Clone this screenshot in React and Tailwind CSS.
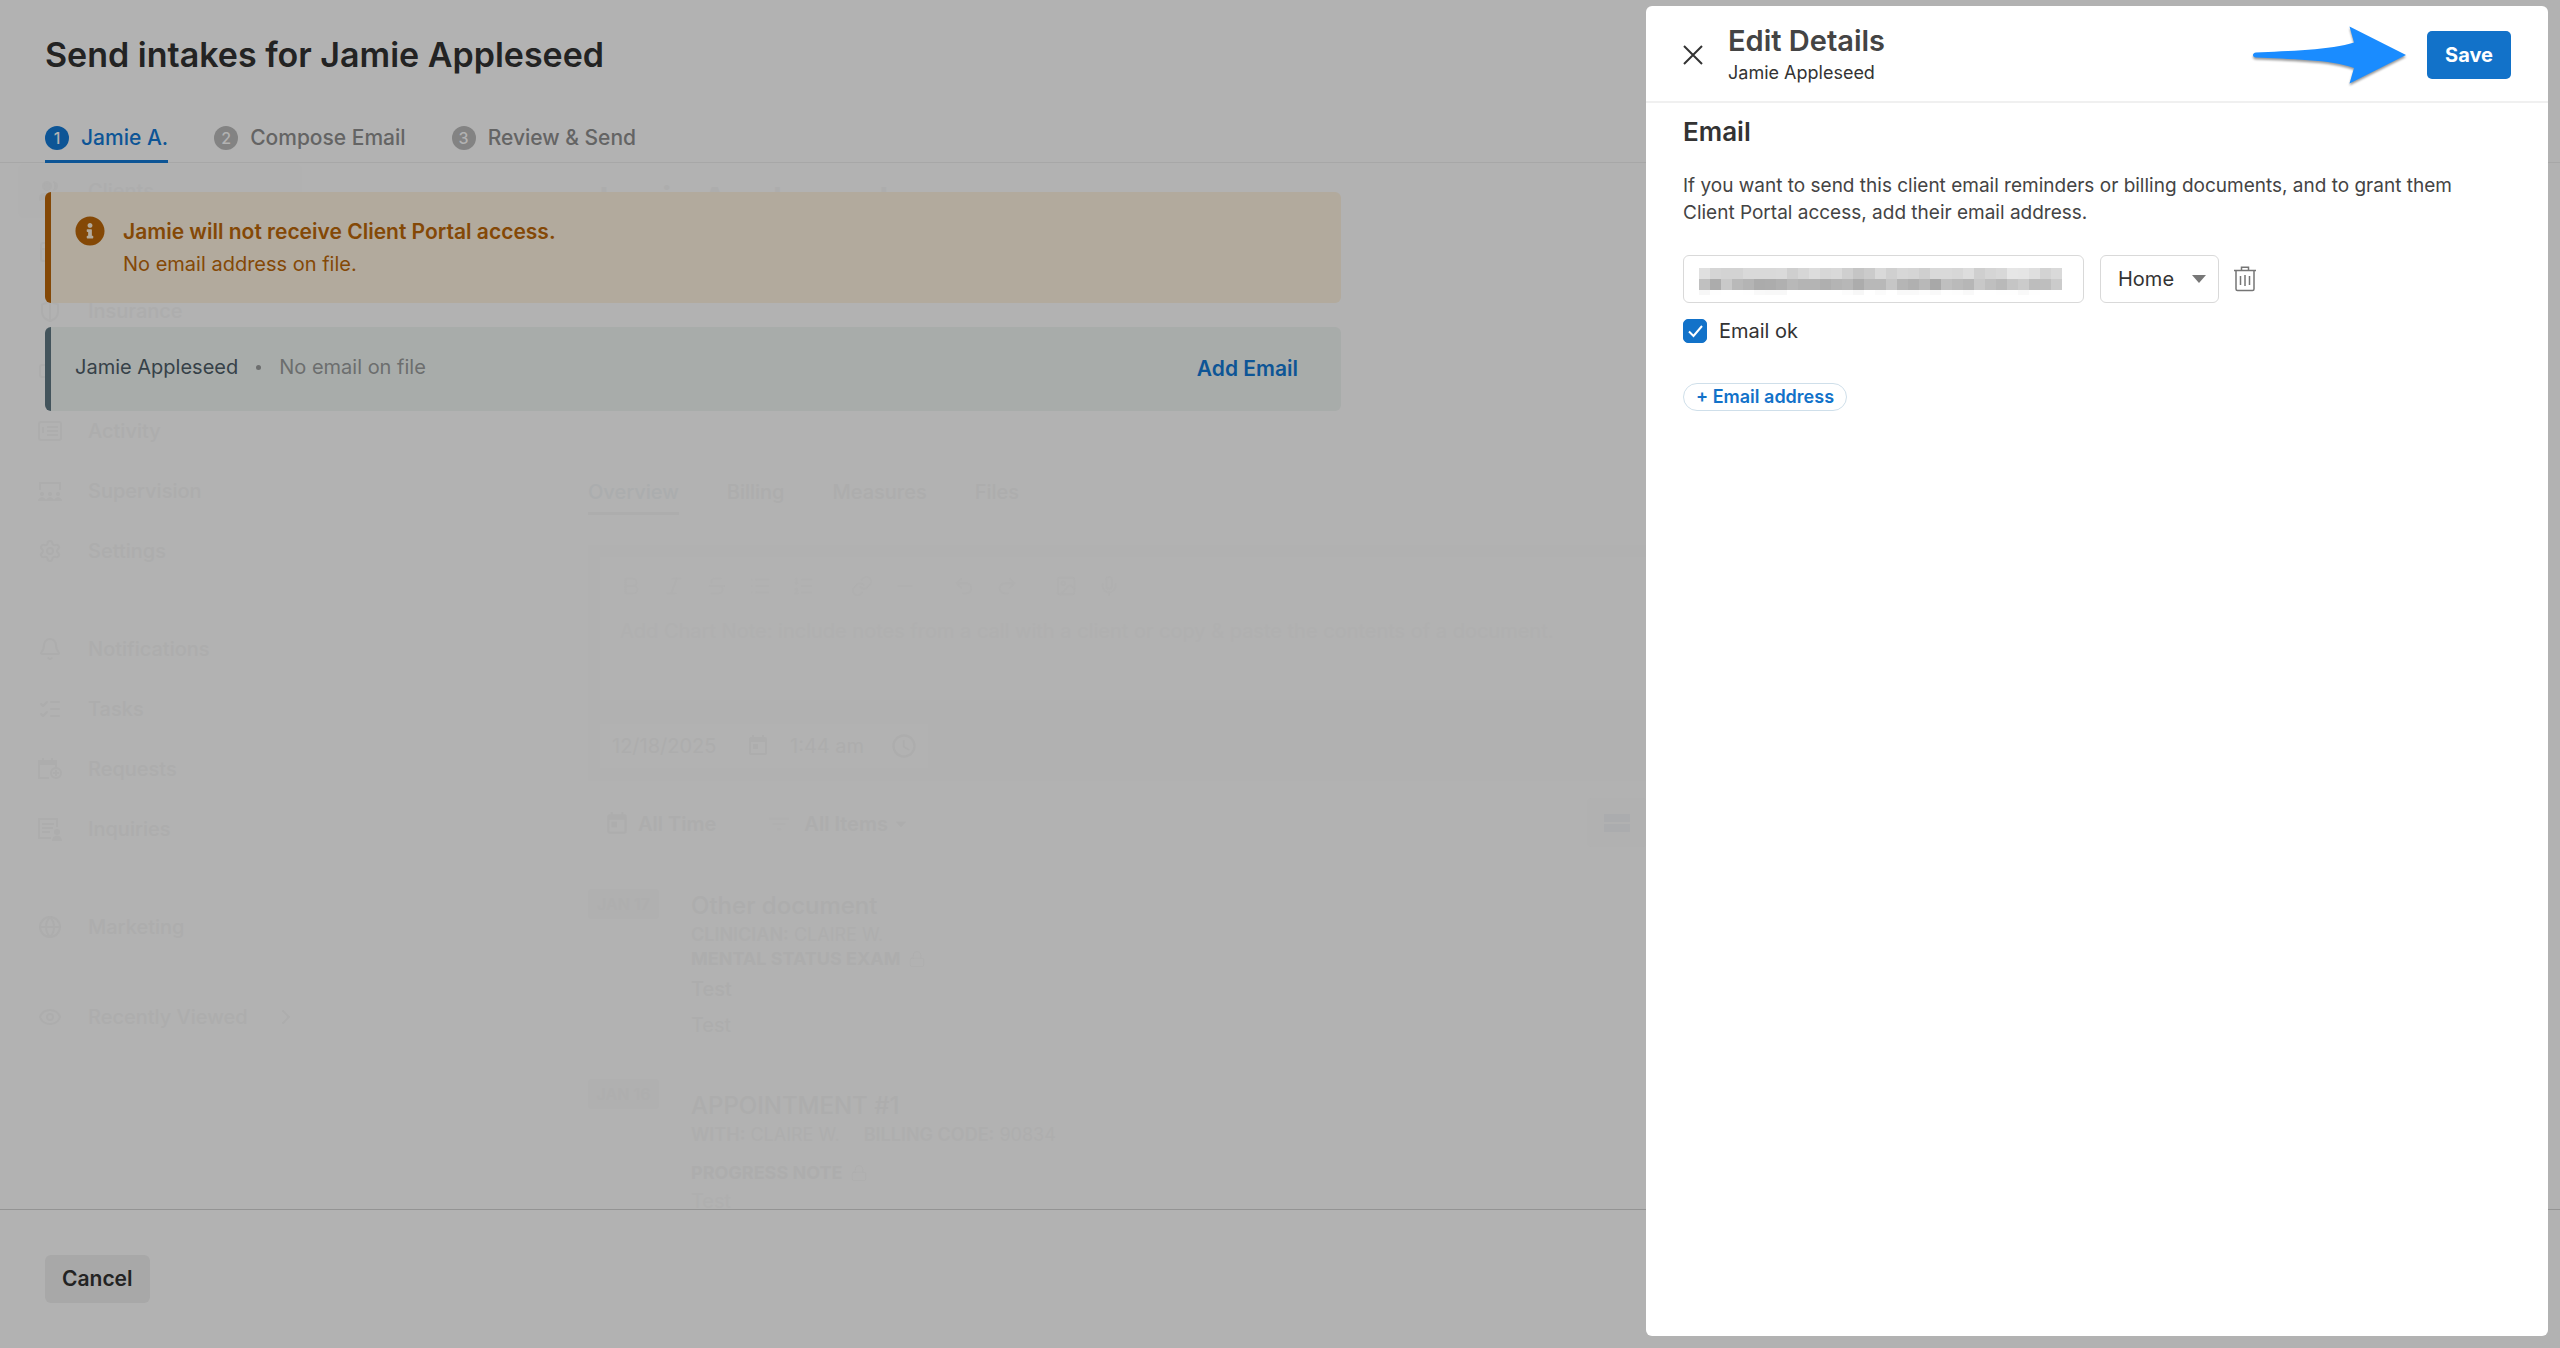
import React, { useState } from "react";
import {
  Users,
  Calendar,
  ShieldHalf,
  Video,
  Bell,
  ListChecks,
  Globe,
  Eye,
  ChevronRight,
  Bold,
  Italic,
  Strikethrough,
  List,
  ListOrdered,
  Link,
  Minus,
  Undo2,
  Redo2,
  Image,
  Mic,
  Settings,
  Lock,
} from "lucide-react";
import { FaInfoCircle } from "react-icons/fa";
import { MdToday, MdAccessTime, MdFilterList, MdArrowDropDown } from "react-icons/md";

const ActivityIcon = () => (
  <svg viewBox="0 0 24 24" className="h-6 w-6" fill="none" stroke="currentColor" strokeWidth="2">
    <rect x="1" y="3" width="22" height="18" rx="2" />
    <path d="M5 8v6M9 8h11M9 12h11M9 16h11" />
  </svg>
);

const SupervisionIcon = () => (
  <svg viewBox="0 0 24 24" className="h-6 w-6" fill="none" stroke="currentColor" strokeWidth="2">
    <path d="M2 11V4h20v7" />
    <g fill="currentColor" stroke="none">
      <circle cx="4" cy="15" r="2" />
      <circle cx="12" cy="15" r="2" />
      <circle cx="20" cy="15" r="2" />
      <path d="M0 22c0-5 8-5 8 0zM8 22c0-5 8-5 8 0zM16 22c0-5 8-5 8 0z" />
    </g>
  </svg>
);

const RequestsIcon = () => (
  <svg viewBox="0 0 24 24" className="h-6 w-6" fill="none" stroke="currentColor" strokeWidth="2">
    <path d="M11 21H1V4h17v6M5 1v4M14 1v4" />
    <path d="M1 6h17" strokeWidth="4" />
    <circle cx="18" cy="16" r="5" />
    <path d="M18 13v6M15 16h6" />
  </svg>
);

const InquiriesIcon = () => (
  <svg viewBox="0 0 24 24" className="h-6 w-6" fill="none" stroke="currentColor" strokeWidth="2">
    <path d="M13 21H1V2h18v8M4 7h12M4 11h11M4 15h8" />
    <circle cx="19" cy="15" r="3" fill="currentColor" stroke="none" />
    <path d="M14 24c0-7 10-7 10 0z" fill="currentColor" stroke="none" />
  </svg>
);

const navGroups = [
  [
    { id: "clients", label: "Clients", icon: <Users size={24} fill="currentColor" />, active: true },
    { id: "calendar", icon: <Calendar size={24} /> },
    { id: "insurance", label: "Insurance", icon: <ShieldHalf size={24} /> },
    { id: "video", icon: <Video size={24} /> },
    { id: "activity", label: "Activity", icon: <ActivityIcon /> },
    { id: "supervision", label: "Supervision", icon: <SupervisionIcon /> },
    { id: "settings", label: "Settings", icon: <Settings size={24} /> },
  ],
  [
    { id: "notifications", label: "Notifications", icon: <Bell size={24} /> },
    { id: "tasks", label: "Tasks", icon: <ListChecks size={24} /> },
    { id: "requests", label: "Requests", icon: <RequestsIcon /> },
    { id: "inquiries", label: "Inquiries", icon: <InquiriesIcon /> },
  ],
  [{ id: "marketing", label: "Marketing", icon: <Globe size={24} /> }],
  [{ id: "recent", label: "Recently Viewed", icon: <Eye size={24} />, more: true }],
];

const steps = ["Jamie A.", "Compose Email", "Review & Send"];

// grey levels of the masked address, one number per block
const maskRows = [
  [224, 213, 211, 211, 217, 217, 217, 218, 207, 214, 221, 215, 217, 207, 197, 203, 217, 208, 215, 213, 207, 217, 217, 215, 221, 207, 213, 216, 230, 229, 223, 211, 217],
  [192, 172, 201, 185, 180, 171, 172, 176, 184, 180, 180, 175, 180, 183, 172, 184, 184, 198, 181, 176, 184, 168, 191, 186, 182, 200, 191, 185, 197, 203, 189, 190, 203],
  [247, 254, 255, 255, 254, 249, 248, 248, 255, 255, 255, 255, 255, 252, 247, 255, 251, 255, 249, 249, 252, 249, 254, 253, 249, 255, 255, 254, 254, 249, 254, 255, 255],
];

function MaskedValue() {
  return (
    <div className="pointer-events-none absolute top-[13px] left-4 overflow-hidden">
      {maskRows.map((row, i) => (
        <div key={i} className={i === 2 ? "flex h-[5px]" : "flex h-[11px]"}>
          {row.map((level, j) => (
            <span key={j} className="w-[11px]" style={{ backgroundColor: `rgb(${level},${level},${level})` }} />
          ))}
        </div>
      ))}
    </div>
  );
}

function ChartSidebar() {
  return (
    <nav className="w-[588px] shrink-0 pt-[161px] pl-[18px] font-medium">
      {navGroups.map((group, i) => (
        <ul key={i} className={i === 2 ? "mb-[30px]" : "mb-[38px]"}>
          {group.map((item) => (
            <li key={item.id} className="flex h-[60px] items-center">
              <div
                className={`flex h-[54px] w-[284px] items-center gap-[26px] rounded-md pl-5 ${
                  item.active ? "bg-[#b1b1b1]" : ""
                }`}
              >
                {item.icon}
                {item.label && <span>{item.label}</span>}
                {item.more && <ChevronRight size={24} />}
              </div>
            </li>
          ))}
        </ul>
      ))}
    </nav>
  );
}

function ChartNotes() {
  return (
    <div className="min-w-0 flex-1 pt-[178px]">
      <h2 className="text-[36px] leading-[44px] font-semibold">Jamie Appleseed</h2>
      <div className="mt-[256px] flex gap-12 leading-7 font-medium">
        <span className="border-b-3 border-[#adadad] pb-1.5 text-[#abadae]">Overview</span>
        <span>Billing</span>
        <span>Measures</span>
        <span>Files</span>
      </div>
      <div className="mt-[30px] mr-12 h-[236px] bg-[#b1b1b1] p-3 text-[#b0b0b0]">
        <div className="h-[143px] bg-[#b2b2b2] px-5 pt-[18px]">
          <div className="flex gap-[21px]">
            <Bold size={22} />
            <Italic size={22} />
            <Strikethrough size={22} />
            <List size={22} />
            <ListOrdered size={22} />
            <Link size={22} className="ml-4" />
            <Minus size={22} />
            <Undo2 size={22} className="ml-4" />
            <Redo2 size={22} />
            <Image size={22} className="ml-4" />
            <Mic size={22} />
          </div>
          <p className="mt-5 leading-7">
            Add Chart Note: include notes from a call with a client or copy &amp; paste the contents of a document.
          </p>
        </div>
        <div className="mt-6 flex h-11 w-[328px] items-center bg-[#b2b2b2] text-[#adadad]">
          <span className="w-[146px] pl-3">12/18/2025</span>
          <MdToday size={24} className="mr-2" />
          <span className="w-[112px] pl-3">1:44 am</span>
          <MdAccessTime size={28} />
        </div>
      </div>
      <div className="mt-[29px] flex h-7 items-center pl-4 font-semibold">
        <MdToday size={26} />
        <span className="ml-2">All Time</span>
        <MdFilterList size={26} className="ml-[50px] text-[#b0b0b0]" />
        <span className="ml-3">All Items</span>
        <MdArrowDropDown size={26} />
      </div>
      <div className="mt-[51px] flex gap-8">
        <span className="h-[30px] w-[71px] rounded bg-[#b0b0b0] text-center text-base leading-[30px] font-semibold text-[#aeaeae]">
          JAN 17
        </span>
        <div className="text-[18px]">
          <h3 className="text-2xl leading-[34px] font-medium">Other document</h3>
          <p className="leading-6 text-[#aeaeae]">
            <b className="font-semibold">CLINICIAN:</b> CLAIRE W.
          </p>
          <p className="flex items-center gap-2 leading-6 font-bold">
            MENTAL STATUS EXAM <Lock size={18} strokeWidth={1} />
          </p>
          <p className="text-[20px] leading-9">
            <b className="font-medium">Test</b>
            <br />
            Test
          </p>
        </div>
      </div>
      <div className="mt-9 flex gap-8">
        <span className="h-[30px] w-[71px] rounded bg-[#b0b0b0] text-center text-base leading-[30px] font-semibold text-[#aeaeae]">
          JAN 16
        </span>
        <div className="pt-[10px] text-[18px]">
          <h3 className="text-2xl leading-[34px] font-medium">APPOINTMENT #1</h3>
          <p className="flex gap-6 leading-6 text-[#aeaeae]">
            <span>
              <b className="font-semibold">WITH:</b> CLAIRE W.
            </span>
            <span>
              <b className="font-semibold">BILLING CODE:</b> 90834
            </span>
          </p>
          <p className="mt-[14px] flex items-center gap-2 leading-6 font-bold">
            PROGRESS NOTE <Lock size={18} strokeWidth={1} />
          </p>
          <p className="text-[20px] leading-8 text-[#afafaf]">Test</p>
        </div>
      </div>
    </div>
  );
}

// the client chart that stays faintly visible behind the send dialog
function ChartBackdrop() {
  return (
    <div className="absolute inset-0 flex overflow-hidden text-[#adadad]" aria-hidden="true">
      <ChartSidebar />
      <ChartNotes />
      <div className="absolute top-[798px] left-[1587px] flex h-[49px] w-[60px] items-center justify-center rounded bg-[#b1b1b1]">
        <div className="flex w-[26px] flex-col gap-0.5">
          <span className="h-2 bg-[#abacae]" />
          <span className="h-2 bg-[#abacae]" />
        </div>
      </div>
    </div>
  );
}

function EditDetails() {
  const [emailOk, setEmailOk] = useState(true);
  const [type, setType] = useState("Home");

  return (
    <section
      role="dialog"
      aria-labelledby="edit-title"
      className="fixed top-1.5 right-3 bottom-3 z-10 w-[902px] max-w-full rounded-md bg-white text-[#333]"
    >
      <header className="flex items-center border-b-2 border-[#f0f0f0] px-[37px] pt-[17px] pb-[14px]">
        <button type="button" aria-label="Close">
          <svg viewBox="0 0 20 20" className="h-5 w-5" fill="none" stroke="#333" strokeWidth="2">
            <path d="M1 1l18 18M19 1L1 19" />
          </svg>
        </button>
        <div className="ml-[25px]">
          <h2 id="edit-title" className="text-[29px] leading-9 font-semibold text-[#444]">
            Edit Details
          </h2>
          <p className="text-[18px] leading-7">Jamie Appleseed</p>
        </div>
        <svg
          viewBox="0 0 156 64"
          className="mr-[19px] ml-auto h-16 w-[156px] drop-shadow-[0_2px_1px_rgba(0,0,0,0.4)]"
          fill="#1a8cff"
        >
          <path d="M4 29.5C35 28 80 27 102 19.5L97.5 3.5L154 32L97.5 60.5L102 45C80 36.500 35 36 4 34.5Q1 34 1 32Q1 30 4 29.5Z" />
        </svg>
        <button type="button" className="h-12 rounded-[5px] bg-[#1272c9] px-[18px] text-[20px] font-bold text-white">
          Save
        </button>
      </header>

      <div className="px-[37px] pt-[13px]">
        <h3 className="text-[26px] leading-8 font-semibold">Email</h3>
        <p className="mt-6 max-w-[800px] text-[19px] leading-[27px] text-[#444]">
          If you want to send this client email reminders or billing documents, and to grant them Client Portal access,
          add their email address.
        </p>

        <div className="mt-[29px] flex items-center">
          <div className="relative">
            <input
              type="email"
              aria-label="Email address"
              className="block h-12 w-[401px] rounded-md border border-[#d9d9d9] px-4 text-[20px] outline-none"
            />
            <MaskedValue />
          </div>
          <div className="relative ml-4">
            <select
              aria-label="Email type"
              value={type}
              onChange={(e) => setType(e.target.value)}
              className="block h-12 w-[119px] appearance-none rounded-md border border-[#d9d9d9] bg-white pl-[17px] text-[20px]"
            >
              <option>Home</option>
              <option>Work</option>
            </select>
            <svg viewBox="0 0 14 8" className="pointer-events-none absolute top-5 right-[13px] h-2 w-[14px]" fill="#777">
              <path d="M0 0h14L7 8z" />
            </svg>
          </div>
          <button type="button" aria-label="Delete email" className="ml-[15px]">
            <svg viewBox="0 0 22 26" className="h-[26px] w-[22px]" fill="none" stroke="#757575" strokeWidth="1.5">
              <path d="M0 4.5h22M7.5 4V1.2h7V4M2 4.5V23q0 1.5 1.5 1.5h15q1.5 0 1.5-1.5V4.5M6.5 10v9M11 9v11M15.5 10v9" />
            </svg>
          </button>
        </div>

        <label className="mt-4 flex w-fit items-center gap-3 text-[20px] leading-6">
          <span className="relative h-6 w-6">
            <input
              type="checkbox"
              checked={emailOk}
              onChange={() => setEmailOk(!emailOk)}
              className="block h-6 w-6 appearance-none rounded-[5px] border border-[#1272c9] checked:bg-[#1272c9]"
            />
            {emailOk && (
              <svg
                viewBox="0 0 24 24"
                className="pointer-events-none absolute inset-0"
                fill="none"
                stroke="#fff"
                strokeWidth="2"
              >
                <path d="M6 12.5l4.500 4.500L19 7" />
              </svg>
            )}
          </span>
          Email ok
        </label>

        <button
          type="button"
          className="mt-10 block h-7 rounded-full border border-[#cfdfea] px-3 text-[18px] leading-[26px] font-semibold text-[#1272c9]"
        >
          + Email address
        </button>
      </div>
    </section>
  );
}

export default function App() {
  return (
    <div className="relative flex min-h-screen flex-col bg-[#b2b2b2] font-['Inter',sans-serif] text-[20px] text-[#232323]">
      <ChartBackdrop />

      <header className="relative border-b border-[#a7a7a7] bg-[#b2b2b2] px-[45px] pt-[35px]">
        <h1 className="text-[34px] leading-10 font-semibold">Send intakes for Jamie Appleseed</h1>
        <nav className="mt-[49px] -mb-px flex gap-[46px]">
          {steps.map((step, i) => (
            <button
              key={step}
              type="button"
              className={`flex items-center gap-3 border-b-3 pb-2 text-[21px] leading-7 font-medium ${
                i === 0 ? "border-[#0d5596] text-[#0d5596]" : "border-transparent text-[#646464]"
              }`}
            >
              <span
                className={`h-6 w-6 rounded-full text-center text-[16px] leading-6 text-[#b2b2b2] ${
                  i === 0 ? "bg-[#0d5596]" : "bg-[#838383]"
                }`}
              >
                {i + 1}
              </span>
              {step}
            </button>
          ))}
        </nav>
      </header>

      <main className="relative flex-1 px-[45px] pt-[29px]">
        <div className="flex max-w-[1296px] gap-[18px] rounded-md border-l-6 border-[#844806] bg-[#b2aa9d] pt-6 pb-[23px] pl-6 leading-8 text-[#844806]">
          <FaInfoCircle size={30} />
          <div>
            <p className="text-[21px] font-semibold">Jamie will not receive Client Portal access.</p>
            <p>No email address on file.</p>
          </div>
        </div>

        <div className="mt-6 flex max-w-[1296px] items-start rounded-md border-l-6 border-[#43545c] bg-[#a8acaa] py-6 pr-[43px] pl-6">
          <p className="flex items-center gap-[18px] leading-8 text-[#6c6e6e]">
            <span className="text-[#364148]">Jamie Appleseed</span>
            <span className="h-[5px] w-[5px] rounded-full bg-[#6c6e6e]" />
            No email on file
          </p>
          <button type="button" className="ml-auto text-[21px] leading-9 font-semibold text-[#0d5596]">
            Add Email
          </button>
        </div>
      </main>

      <footer className="relative border-t border-[#949494] bg-[#b2b2b2] px-[45px] py-[45px]">
        <button type="button" className="h-12 rounded-md bg-[#a8a8a8] px-[17px] text-[21px] font-semibold">
          Cancel
        </button>
      </footer>

      <EditDetails />
    </div>
  );
}
